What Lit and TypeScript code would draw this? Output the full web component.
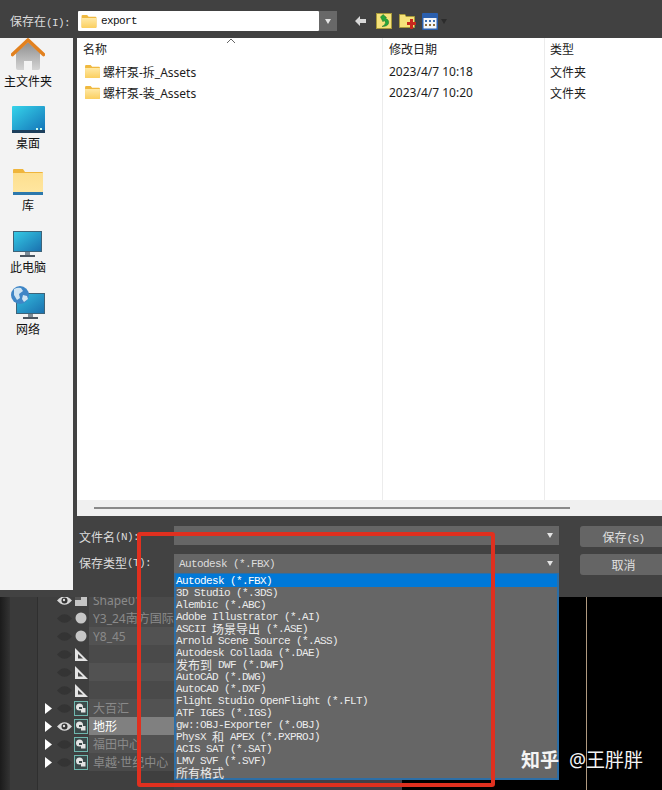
import { LitElement, html, css, svg } from "lit";
import { customElement } from "lit/decorators.js";

const folder = (w = 16, h = 14) => svg`<svg width=${w} height=${h} viewBox="0 0 16 14">
  <defs><linearGradient id="fg" x1="0" y1="0" x2="0" y2="1"><stop offset="0" stop-color="#ffe9a6"/><stop offset="1" stop-color="#fbcf5f"/></linearGradient></defs>
  <path d="M0 1.2Q0 0 1.2 0H6l1.6 2H15q1 0 1 1v9.8q0 1.2-1.2 1.2H1.2Q0 14 0 12.8z" fill="#f0b93f"/>
  <path d="M0 3.2H16V12.8Q16 14 14.8 14H1.2Q0 14 0 12.8z" fill="url(#fg)"/></svg>`;

const home = svg`<svg width="34" height="33" viewBox="0 0 34 33">
  <defs><linearGradient id="hg" x1="0" y1="0" x2="0" y2="1"><stop offset="0" stop-color="#8e8e8e"/><stop offset="1" stop-color="#d4d4d4"/></linearGradient></defs>
  <path d="M5 15 17 4 29 15V30Q29 32 27 32H21V23H13V32H7Q5 32 5 30z" fill="url(#hg)"/>
  <path d="M1.500 16.500 17 2 32.500 16.500" fill="none" stroke="#e2811f" stroke-width="3.600" stroke-linecap="round" stroke-linejoin="round"/></svg>`;

const desktop = svg`<svg width="33" height="27" viewBox="0 0 33 27">
  <defs><linearGradient id="dg" x1="0" y1="0" x2="1" y2="1"><stop offset="0" stop-color="#36d4ea"/><stop offset="1" stop-color="#1474b8"/></linearGradient></defs>
  <rect width="33" height="25" rx="1" fill="url(#dg)"/><rect y="24" width="33" height="3" fill="#1d3f5c"/>
  <rect x="24" y="22" width="2" height="2" fill="#cfe"/><rect x="28" y="22" width="2" height="2" fill="#cfe"/></svg>`;

const library = svg`<svg width="30" height="26" viewBox="0 0 30 26">
  <defs><linearGradient id="lg" x1="0" y1="0" x2="0" y2="1"><stop offset="0" stop-color="#fddf8f"/><stop offset="1" stop-color="#ffe6a0"/></linearGradient></defs>
  <path d="M0 1Q0 0 1 0H10L12 3H29Q30 3 30 4V24H0z" fill="#efb53c"/>
  <rect y="4" width="30" height="20" fill="url(#lg)"/><rect y="23" width="30" height="3" fill="#2c78ac"/></svg>`;

const monitor = svg`<svg width="29" height="26" viewBox="0 0 29 26">
  <defs><linearGradient id="mg" x1="0" y1="0" x2="1" y2="1"><stop offset="0" stop-color="#34cbe6"/><stop offset="1" stop-color="#1a6fae"/></linearGradient></defs>
  <rect x="0.500" y="0.500" width="28" height="20" fill="url(#mg)" stroke="#3e6378"/>
  <rect x="12" y="21" width="5" height="3" fill="#7d8b96"/><rect x="7" y="24" width="15" height="2" fill="#4a5560"/></svg>`;

const network = svg`<svg width="34" height="33" viewBox="0 0 34 33">
  <defs><linearGradient id="ng" x1="0" y1="0" x2="1" y2="1"><stop offset="0" stop-color="#34bfe0"/><stop offset="1" stop-color="#1a6fae"/></linearGradient></defs>
  <rect x="5.500" y="7.500" width="28" height="20" fill="url(#ng)" stroke="#3e6378"/>
  <rect x="17" y="28" width="5" height="3" fill="#7d8b96"/><rect x="12" y="31" width="15" height="2" fill="#4a5560"/>
  <circle cx="9" cy="9" r="9" fill="#3f86c6"/>
  <path d="M3 3Q7 1 10 2L12 5 8 8 9 12 6 14 3 9zM12 9l4 1 1 3-4 3-2-3z" fill="#cfe4f2"/></svg>`;

const back = svg`<svg width="11" height="10" viewBox="0 0 11 10"><path d="M0 5 5 0V3H11V7H5V10z" fill="#d8d8d8"/></svg>`;
const up = svg`<svg width="16" height="16" viewBox="0 0 16 16"><rect x="0.500" y="0.500" width="15" height="15" fill="#f5e27a" stroke="#a89a3a"/>
  <path d="M7 1.500 10.500 4.500 9 5.200Q13.500 6.500 12.500 10.500 11.500 13.500 6 13.500 9.500 12 9.500 9.500 9 8 8 7.200L7 8.800 4.500 4z" fill="#27a53a" stroke="#15702a" stroke-width=".5"/></svg>`;
const newFolder = svg`<svg width="17" height="16" viewBox="0 0 17 16"><path d="M0.500 1.500V14.500H15.500V3.500H7L6 1.500z" fill="#f5e27a" stroke="#a89a3a"/>
  <path d="M8 9H11V6H14V9H17V12H14V16H11V12H8z" fill="#c8281e"/></svg>`;
const viewIcon = svg`<svg width="16" height="17" viewBox="0 0 16 17"><rect width="16" height="17" rx="1" fill="#2a5fae"/><rect x="1.500" y="5" width="13" height="10.500" fill="#f4f6f8"/>
  ${[3, 7, 11].map((x) => [7, 11].map((y, i) => svg`<rect x=${x} y=${y} width="2" height="2" fill=${i ? "#8d6c3a" : "#3f6fb0"}/>`))}</svg>`;

const eyeOpen = svg`<svg width="15" height="11" viewBox="0 0 15 11"><path d="M0 5.500Q7.500-3 15 5.500 7.500 14 0 5.500z" fill="#d8d8d8"/><circle cx="7.500" cy="5.500" r="3" fill="#333"/><circle cx="7" cy="5" r="1.200" fill="#ddd"/></svg>`;
const eyeClosed = svg`<svg width="15" height="11" viewBox="0 0 15 11"><path d="M0 5.500Q7.500-3 15 5.500 7.500 14 0 5.500z" fill="#343434"/></svg>`;
const circleIcon = svg`<svg width="14" height="14" viewBox="0 0 14 14"><circle cx="7" cy="7" r="5.500" fill="#c6c6c6"/></svg>`;
const shapeIcon = svg`<svg width="14" height="14" viewBox="0 0 14 14"><rect x="1" y="1" width="12" height="12" fill="#c4c4c4"/><path d="M1 1H7V7H1z" fill="#555"/></svg>`;
const triIcon = svg`<svg width="15" height="15" viewBox="0 0 15 15"><path d="M1 1V14H14z" fill="#e4e4e4"/><path d="M4 7V11.500H9z" fill="#444"/></svg>`;
const sceneIcon = svg`<svg width="14" height="15" viewBox="0 0 14 15"><rect x="0.500" y="0.500" width="13" height="14" fill="#3b4a4a" stroke="#6fb7ae"/><circle cx="5.500" cy="6" r="3.500" fill="#e4e4e4"/><rect x="7" y="7" width="4.500" height="4.500" fill="#e4e4e4"/><path d="M5 6h3v2H5z" fill="#3b4a4a"/></svg>`;
const expand = svg`<svg width="7" height="11" viewBox="0 0 7 11"><path d="M0 0 7 5.500 0 11z" fill="#fff"/></svg>`;

const places = [
  { icon: home, label: "主文件夹" },
  { icon: desktop, label: "桌面" },
  { icon: library, label: "库" },
  { icon: monitor, label: "此电脑" },
  { icon: network, label: "网络" },
];

const files = [
  { name: "螺杆泵-拆_Assets", date: "2023/4/7 10:18", type: "文件夹" },
  { name: "螺杆泵-装_Assets", date: "2023/4/7 10:20", type: "文件夹" },
];

const formats = [
  "Autodesk (*.FBX)", "3D Studio (*.3DS)", "Alembic (*.ABC)", "Adobe Illustrator (*.AI)",
  "ASCII 场景导出 (*.ASE)", "Arnold Scene Source (*.ASS)", "Autodesk Collada (*.DAE)",
  "发布到 DWF (*.DWF)", "AutoCAD (*.DWG)", "AutoCAD (*.DXF)", "Flight Studio OpenFlight (*.FLT)",
  "ATF IGES (*.IGS)", "gw::OBJ-Exporter (*.OBJ)", "PhysX 和 APEX (*.PXPROJ)", "ACIS SAT (*.SAT)",
  "LMV SVF (*.SVF)", "所有格式",
];

const layers = [
  { name: "Shape01", icon: shapeIcon, eye: true, arrow: false, tone: "a" },
  { name: "Y3_24南方国际", icon: circleIcon, eye: false, arrow: false, tone: "a" },
  { name: "Y8_45", icon: circleIcon, eye: false, arrow: false, tone: "b" },
  { name: "", icon: triIcon, eye: false, arrow: false, tone: "a" },
  { name: "", icon: triIcon, eye: false, arrow: false, tone: "b" },
  { name: "", icon: triIcon, eye: false, arrow: false, tone: "a" },
  { name: "大百汇", icon: sceneIcon, eye: false, arrow: true, tone: "b" },
  { name: "地形", icon: sceneIcon, eye: true, arrow: true, tone: "sel" },
  { name: "福田中心", icon: sceneIcon, eye: false, arrow: true, tone: "b" },
  { name: "卓越·世纪中心", icon: sceneIcon, eye: false, arrow: true, tone: "a" },
];

const mixed = (text: string) =>
  text.split(/([\u4e00-\u9fff]+)/).filter(Boolean).map((part) =>
    /[\u4e00-\u9fff]/.test(part) ? html`<span class="cjk">${part}</span>` : html`<span>${part}</span>`);

@customElement("app-root")
export class AppRoot extends LitElement {
  static styles = css`
    :host {
      display: block;
      width: 662px;
      height: 790px;
      position: relative;
      overflow: hidden;
      background: #3c3c3c;
      font-family: "Noto Sans", "Noto Sans CJK SC", sans-serif;
      font-size: 12px;
    }
    .mono { font-family: "Liberation Mono", "Noto Sans CJK SC", monospace; font-size: 11px; letter-spacing: -0.6px; }
    .cjk { font-family: "Noto Sans CJK SC", sans-serif; font-size: 12px; letter-spacing: 0; }

    .toolbar {
      height: 38px;
      box-sizing: border-box;
      padding: 11px 0 7px 10px;
      display: flex;
      align-items: center;
      background: #414141;
      color: #dcdcdc;
    }
    .toolbar .lbl { width: 68px; white-space: nowrap; }
    .path {
      width: 241px; height: 20px;
      background: #fff; color: #111;
      display: flex; align-items: center; gap: 4px;
      padding-left: 3px; box-sizing: border-box;
      border-radius: 1px;
    }
    .drop {
      width: 18px; height: 20px; background: #686868;
      display: flex; align-items: center; justify-content: center;
      margin-right: 18px;
    }
    .tri { width: 0; height: 0; border: 3.5px solid transparent; border-top: 5px solid #e4e4e4; border-bottom: 0; }
    .tools { display: flex; align-items: center; }
    .tools .b { margin-right: 10px; display: flex; }
    .tools .u { margin-right: 7px; display: flex; }
    .tools .n { margin-right: 6px; display: flex; }
    .tools .v { margin-right: 3px; display: flex; }
    .tri.dark { border-top-color: #2c2c2c; }

    .body { display: flex; height: 559px; background: #424242; }
    .side {
      width: 73px; height: 552px; background: #f3f3f3;
      display: flex; flex-direction: column; align-items: center;
      color: #111; padding-right: 17px; box-sizing: border-box;
    }
    .place { height: 62px; flex: none; display: flex; flex-direction: column; align-items: center; justify-content: flex-end; line-height: 15px; gap: 3px; white-space: nowrap; }
    .place:first-child { height: 51px; }
    .place span { display: block; height: 15px; }
    .place svg { display: block; }
    .main { flex: 1; min-width: 0; margin-left: 4px; display: flex; flex-direction: column; }
    .list { height: 478px; background: #fff; position: relative; display: flex; flex-direction: column; color: #1c1c1c; }
    .row, .head { display: grid; grid-template-columns: 305px 162px 1fr; }
    .head { height: 22px; align-items: center; }
    .head span { padding-left: 6px; }
    .head span + span { padding-left: 7px; }
    .head span:last-child { padding-left: 6px; }
    .rows { padding-top: 1px; flex: 1; display: flex; flex-direction: column; }
    .row { height: 21px; align-items: center; }
    .row .nm { display: flex; align-items: center; gap: 3px; padding-left: 8px; }
    .row .dt { padding-left: 7px; }
    .row .ty { padding-left: 6px; }
    .sep { position: absolute; top: 0; bottom: 16px; width: 1px; background: #ececec; }
    .sep.s1 { left: 305px; }
    .sep.s2 { left: 467px; }
    .caret { position: absolute; left: 149px; top: 0; color: #555; }
    .hbar { height: 16px; background: #f0f0f0; display: flex; align-items: center; padding-left: 17px; }
    .thumb { width: 476px; height: 2px; background: #8a8a8a; }

    .form { display: grid; grid-template-columns: 97px 385px 108px; padding-top: 10px; row-gap: 7px; color: #dcdcdc; }
    .form .lab { display: flex; align-items: center; padding-left: 2px; white-space: pre; }
    .form .lab.second { padding-bottom: 5px; }
    .field { height: 19px; background: #666; display: flex; align-items: center; justify-content: space-between; padding: 0 6px 0 5px; box-sizing: border-box; color: #ddd; }
    .form .btn {
      margin-left: 21px; width: 87px; height: 21px; background: #656565; border-radius: 3px;
      display: flex; align-items: center; justify-content: center; color: #e0e0e0; box-sizing: border-box;
    }

    .bottom { height: 193px; display: flex; overflow: hidden; background: #000; }
    .strip1 { width: 10px; flex: none; background: linear-gradient(90deg, #1b1b1b, #333); }
    .strip2 { width: 28px; flex: none; box-sizing: border-box; background: #3a3a3a; border-right: 1px solid #2f2f2f; }
    .tree { width: 136px; flex: none; background: #3f3f3f; padding-left: 3px; box-sizing: border-box; }
    .rowsl { margin-top: -6px; display: flex; flex-direction: column; }
    .lay { height: 18px; display: grid; grid-template-columns: 15px 17px 16px 1fr; align-items: center; }
    .lay > div { display: flex; align-items: center; justify-content: center; min-width: 0; }
    .lay .nm { height: 100%; justify-content: flex-start; padding-left: 4px; color: #8a8a8a; font-size: 12px; white-space: nowrap; overflow: hidden; }
    .lay .nm.a { background: #4a4a4a; }
    .lay .nm.b { background: #525252; }
    .lay .nm.sel { background: #808080; color: #fff; }
    .canvas { flex: 1; background: #000; position: relative; }
    .vline { position: absolute; left: 412px; top: 0; bottom: 0; width: 1px; background: #b09a80; }
    .floor { position: absolute; left: 0; width: 228px; bottom: 0; height: 10px; background: #443f46; }

    .menu {
      position: absolute; left: 174px; top: 573px; width: 385px; height: 207px;
      box-sizing: border-box; background: #666; color: #ececec;
      border: 1px solid #2c6ea6; border-width: 1px 2px 2px 2px;
      display: flex; flex-direction: column;
    }
    .menu div { height: 12px; flex: none; display: flex; align-items: center; white-space: pre; }
    .menu div span { display: block; line-height: 12px; }
    .menu .on { background: #0078d7; color: #fff; height: 13px; }
    .redbox {
      position: absolute; left: 137px; top: 532px; width: 358px; height: 255px;
      box-sizing: border-box; border: 4px solid #e0301f; border-radius: 3px; pointer-events: none;
    }
    .mark {
      position: absolute; left: 521px; top: 747px; color: #f4f4f4;
      font-size: 19px; line-height: 27px; display: flex; gap: 10px; white-space: nowrap;
    }
    .mark b { font-weight: 600; }
    .mark span { font-size: 19px; font-weight: 400; }
  `;

  render() {
    return html`
      <div class="toolbar">
        <span class="lbl">保存在<span class="mono">(I):</span></span>
        <div class="path">${folder(16, 13)}<span class="mono">export</span></div>
        <div class="drop"><i class="tri"></i></div>
        <div class="tools">
          <span class="b">${back}</span>
          <span class="u">${up}</span>
          <span class="n">${newFolder}</span>
          <span class="v">${viewIcon}</span>
          <i class="tri dark"></i>
        </div>
      </div>
      <div class="body">
        <nav class="side">
          ${places.map((p) => html`<div class="place">${p.icon}<span>${p.label}</span></div>`)}
        </nav>
        <div class="main">
          <div class="list">
            <div class="head"><span>名称</span><span>修改日期</span><span>类型</span></div>
            <svg class="caret" width="10" height="6" viewBox="0 0 10 6"><path d="M1 5 5 1 9 5" fill="none" stroke="#666"/></svg>
            <i class="sep s1"></i><i class="sep s2"></i>
            <div class="rows">
              ${files.map((f) => html`<div class="row">
                <span class="nm">${folder(15, 13)}<span>${f.name}</span></span>
                <span class="dt">${f.date}</span><span class="ty">${f.type}</span>
              </div>`)}
            </div>
            <div class="hbar"><div class="thumb"></div></div>
          </div>
          <div class="form">
            <span class="lab">文件名<span class="mono">(N):</span></span>
            <div class="field"><span></span><i class="tri"></i></div>
            <div class="btn"><span>保存<span class="mono">(S)</span></span></div>
            <span class="lab second">保存类型<span class="mono">(T):</span></span>
            <div class="field"><span class="mono">Autodesk (*.FBX)</span><i class="tri"></i></div>
            <div class="btn">取消</div>
          </div>
        </div>
      </div>
      <div class="bottom">
        <div class="strip1"></div>
        <div class="strip2"></div>
        <div class="tree">
          <div class="rowsl">
            ${layers.map((l) => html`<div class="lay">
              <div>${l.arrow ? expand : ""}</div>
              <div>${l.eye ? eyeOpen : eyeClosed}</div>
              <div>${l.icon}</div>
              <div class="nm ${l.tone}">${l.name}</div>
            </div>`)}
          </div>
        </div>
        <div class="canvas">
          <i class="floor"></i>
          <i class="vline"></i>
        </div>
      </div>
      <div class="menu mono">
        ${formats.map((f, i) => html`<div class=${i === 0 ? "on" : ""}>${mixed(f)}</div>`)}
      </div>
      <div class="redbox"></div>
      <div class="mark"><b>知乎</b><span>@王胖胖</span></div>
    `;
  }
}
